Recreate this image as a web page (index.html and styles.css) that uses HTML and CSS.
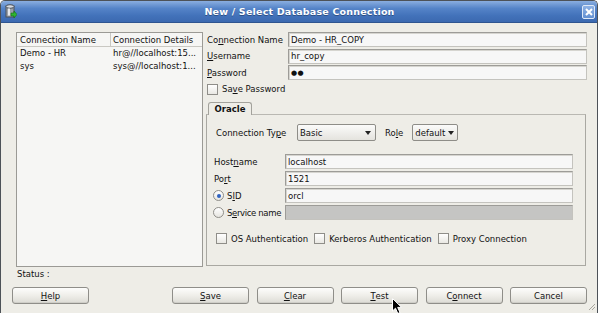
FILE: index.html
```html
<!DOCTYPE html>
<html lang="en">
<head>
    <meta charset="UTF-8">
    <title>New / Select Database Connection</title>
    <link rel="stylesheet" href="styles.css">
</head>
<body>
    <div class="window">
        <!-- Barra de título -->
        <div class="titlebar">
            <svg class="app-icon" width="12" height="16" viewBox="0 0 12 16">
                <rect x="1" y="2" width="8" height="11" fill="#9aa0a8" stroke="#4c525a" stroke-width="1"/>
                <ellipse cx="5" cy="2.5" rx="4" ry="1.8" fill="#d8dce2" stroke="#4c525a" stroke-width="1"/>
                <rect x="3" y="4.5" width="2" height="7" fill="#e6e8ec"/>
                <path d="M6 9 L9 9 L9 7 L12 10.5 L9 14 L9 12 L6 12 Z" fill="#2fb42f" stroke="#137013" stroke-width="0.6"/>
            </svg>
            <span class="title">New / Select Database Connection</span>
            <span class="close-btn">
                <svg width="8" height="8" viewBox="0 0 8 8">
                    <path d="M1 1 L7 7 M7 1 L1 7" stroke="#ffffff" stroke-width="2"/>
                </svg>
            </span>
        </div>

        <div class="content">
            <div class="main">
                <!-- Lista de conexões -->
                <div class="conn-list">
                    <div class="list-head">
                        <span class="col-name">Connection Name</span>
                        <span class="col-details">Connection Details</span>
                    </div>
                    <div class="list-row">
                        <span class="col-name">Demo - HR</span>
                        <span class="col-details">hr@//localhost:15...</span>
                    </div>
                    <div class="list-row">
                        <span class="col-name">sys</span>
                        <span class="col-details">sys@//localhost:1...</span>
                    </div>
                </div>

                <!-- Formulário -->
                <div class="form">
                    <div class="field-row">
                        <span class="field-label">Co<u>n</u>nection Name</span>
                        <div class="text-input">Demo - HR_COPY</div>
                    </div>
                    <div class="field-row">
                        <span class="field-label"><u>U</u>sername</span>
                        <div class="text-input">hr_copy</div>
                    </div>
                    <div class="field-row">
                        <span class="field-label"><u>P</u>assword</span>
                        <div class="text-input password">&#9679;&#9679;</div>
                    </div>
                    <div class="check-line">
                        <span class="checkbox"></span>
                        <span>Sa<u>v</u>e Password</span>
                    </div>

                    <div class="tabs">
                        <div class="tab">Oracle</div>
                        <div class="tab-panel">
                            <div class="type-row">
                                <span class="type-label">Connection Ty<u>p</u>e</span>
                                <div class="select select-type">Basic<span class="arrow"></span></div>
                                <span class="role-label">Ro<u>l</u>e</span>
                                <div class="select select-role">default<span class="arrow"></span></div>
                            </div>

                            <div class="panel-fields">
                                <div class="panel-row">
                                    <span class="panel-label">Host<u>n</u>ame</span>
                                    <div class="text-input">localhost</div>
                                </div>
                                <div class="panel-row">
                                    <span class="panel-label">Po<u>r</u>t</span>
                                    <div class="text-input">1521</div>
                                </div>
                                <div class="panel-row">
                                    <span class="panel-label"><span class="radio checked"></span>S<u>I</u>D</span>
                                    <div class="text-input">orcl</div>
                                </div>
                                <div class="panel-row">
                                    <span class="panel-label tight"><span class="radio"></span>S<u>e</u>rvice name</span>
                                    <div class="text-input disabled"></div>
                                </div>
                            </div>

                            <div class="auth-row">
                                <span class="checkbox"></span><span class="auth-text">OS Authentication</span>
                                <span class="checkbox"></span><span class="auth-text">Kerberos Authentication</span>
                                <span class="checkbox"></span><span class="auth-text">Proxy Connection</span>
                            </div>
                        </div>
                    </div>
                </div>
            </div>

            <div class="status">Status :</div>

            <div class="button-bar">
                <div class="btn"><u>H</u>elp</div>
                <div class="btn-group">
                    <div class="btn"><u>S</u>ave</div>
                    <div class="btn"><u>C</u>lear</div>
                    <div class="btn"><u>T</u>est</div>
                    <div class="btn">C<u>o</u>nnect</div>
                    <div class="btn">Cancel</div>
                </div>
            </div>
        </div>

        <!-- Ponteiro do mouse sobre o botão Test -->
        <svg class="cursor" width="12" height="17" viewBox="0 0 12 17">
            <path d="M0.5 0.5 L0.5 13 L3.5 10.2 L5.8 15.5 L8 14.5 L5.7 9.4 L9.6 9.4 Z" fill="#000000" stroke="#ffffff" stroke-width="1"/>
        </svg>

        <!-- Alça de redimensionar -->
        <svg class="grip" width="8" height="8" viewBox="0 0 8 8">
            <path d="M7 1 L1 7 M7 4 L4 7 M7 7 L7 7" stroke="#a8a69e" stroke-width="1"/>
        </svg>
    </div>
</body>
</html>
```

FILE: styles.css
```css
/* Página */
body {
    margin: 0;
    padding: 0;
    background-color: #ffffff;
    font-family: "DejaVu Sans", sans-serif;
    font-size: 8.5px;
    color: #111111;
    overflow: hidden;
}

u {
    text-underline-offset: 1px;
}

.window {
    position: relative;
    box-sizing: border-box;
    width: 598px;
    height: 313px;
    border: 1px solid #4d5258;
    border-bottom: none;
    border-radius: 5px 5px 0 0;
    background-color: #eeede7;
    display: flex;
    flex-direction: column;
    overflow: hidden;
}

/* Barra de título */
.titlebar {
    height: 21px;
    display: flex;
    align-items: center;
    padding: 0 2px 0 4px;
    background: linear-gradient(#8aaee0, #5584c8 35%, #4272ba 70%, #3c69b0);
    border-bottom: 1px solid #2f5590;
}

.app-icon {
    flex: none;
}

.title {
    flex: 1;
    text-align: center;
    color: #ffffff;
    font-weight: bold;
    font-size: 9.5px;
    letter-spacing: 0.2px;
    text-shadow: 0 1px 0 #2d4f85;
}

.close-btn {
    width: 11px;
    height: 12px;
    display: flex;
    align-items: center;
    justify-content: center;
    border: 1px solid #dfe9f7;
    border-radius: 2px;
    background: linear-gradient(#8fb2e4, #6290d2);
}

/* Conteúdo */
.content {
    flex: 1;
    padding: 9px 10px 0 11px;
    display: flex;
    flex-direction: column;
}

.main {
    display: flex;
    gap: 3px;
    margin-left: 4px;
    height: 235px;
}

/* Lista de conexões */
.conn-list {
    box-sizing: border-box;
    width: 187px;
    height: 235px;
    border: 1px solid #9b9a95;
    background-color: #f6f6f4;
}

.list-head,
.list-row {
    display: flex;
    align-items: center;
}

.list-head {
    height: 13px;
    border-bottom: 1px solid #c9c8c2;
}

.list-row {
    height: 12.5px;
}

.col-name {
    width: 90px;
    padding-left: 3px;
}

.col-details {
    padding-left: 3px;
}

.list-head .col-details {
    align-self: stretch;
    display: flex;
    align-items: center;
    border-left: 1px solid #c9c8c2;
    padding-left: 2px;
}

/* Formulário */
.form {
    width: 381px;
    display: flex;
    flex-direction: column;
}

.field-row {
    display: flex;
    align-items: center;
    height: 15px;
    margin-bottom: 1.5px;
}

.field-label {
    width: 81px;
    padding-left: 1px;
}

.text-input {
    box-sizing: border-box;
    height: 15px;
    flex: 1;
    display: flex;
    align-items: center;
    padding-left: 2px;
    background-color: #f7f7f7;
    border: 1px solid #9d9c98;
    border-right-color: #c4c3be;
    border-bottom-color: #c4c3be;
    box-shadow: inset 1px 1px 0 #d6d5d0;
}

.text-input.password {
    font-size: 7px;
    letter-spacing: 0.5px;
}

.text-input.disabled {
    background-color: #c5c5c3;
    box-shadow: none;
}

.check-line {
    display: flex;
    align-items: center;
    height: 14px;
    margin-top: 0.5px;
    padding-left: 1px;
}

.checkbox {
    box-sizing: border-box;
    width: 11px;
    height: 11px;
    flex: none;
    border: 1px solid #8f8e89;
    background: linear-gradient(#ffffff, #e9e8e3);
    margin-right: 4px;
}

/* Aba Oracle */
.tabs {
    margin-top: 6px;
}

.tab {
    position: relative;
    z-index: 1;
    box-sizing: border-box;
    width: 44px;
    height: 13px;
    margin-left: 2px;
    margin-bottom: -1px;
    border: 1px solid #a3a29c;
    border-bottom: none;
    border-radius: 3px 3px 0 0;
    background-color: #eeede7;
    font-weight: bold;
    text-align: center;
    line-height: 12px;
}

.tab-panel {
    box-sizing: border-box;
    width: 380px;
    height: 152px;
    border: 1px solid #a9a8a2;
    border-top-color: #b9b8b2;
    padding: 9px 0 0 7px;
}

.type-row {
    display: flex;
    align-items: center;
    height: 17px;
    padding-left: 2px;
}

.type-label {
    width: 81px;
}

.role-label {
    margin: 0 9px 0 9px;
}

.select {
    box-sizing: border-box;
    height: 17px;
    display: flex;
    align-items: center;
    justify-content: space-between;
    padding: 0 4px 0 2px;
    border: 1px solid #8e8d88;
    border-radius: 2px;
    background: linear-gradient(#fbfbfa, #e4e3de);
}

.select-type {
    width: 79px;
}

.select-role {
    width: 46px;
    padding-right: 3px;
}

.arrow {
    width: 0;
    height: 0;
    border-left: 3.5px solid transparent;
    border-right: 3.5px solid transparent;
    border-top: 4px solid #222222;
}

.panel-fields {
    margin-top: 13px;
    display: flex;
    flex-direction: column;
    gap: 2px;
}

.panel-row {
    display: flex;
    align-items: center;
    height: 15px;
    width: 359px;
}

.panel-label {
    width: 71px;
    flex: none;
    display: flex;
    align-items: center;
    white-space: nowrap;
}

.panel-label.tight {
    letter-spacing: -0.35px;
}

.radio {
    position: relative;
    box-sizing: border-box;
    width: 11px;
    height: 11px;
    flex: none;
    margin-left: -1px;
    margin-right: 3px;
    border: 1px solid #8f8e89;
    border-radius: 50%;
    background: linear-gradient(#ffffff, #e6e5e0);
}

.radio.checked::after {
    content: "";
    position: absolute;
    left: 2.5px;
    top: 2.5px;
    width: 4px;
    height: 4px;
    border-radius: 50%;
    background-color: #2f63c0;
}

.auth-row {
    display: flex;
    align-items: center;
    margin-top: 13px;
    padding-left: 2px;
    height: 11px;
}

.auth-text {
    margin-right: 6px;
}

/* Rodapé */
.status {
    margin: 1px 0 0 5px;
    height: 12px;
    line-height: 12px;
}

.button-bar {
    display: flex;
    margin-top: 7px;
}

.btn-group {
    margin-left: auto;
    display: flex;
    gap: 7.5px;
}

.btn {
    box-sizing: border-box;
    width: 77px;
    height: 17px;
    display: flex;
    align-items: center;
    justify-content: center;
    border: 1px solid #8f8e89;
    border-radius: 3px;
    background: linear-gradient(#fdfdfc, #efeee9 50%, #dcdbd5);
    box-shadow: inset 0 -1px 0 #cfcec8;
}

.cursor {
    position: absolute;
    left: 391px;
    top: 297px;
}

.grip {
    position: absolute;
    right: 1px;
    top: 302px;
}
```
